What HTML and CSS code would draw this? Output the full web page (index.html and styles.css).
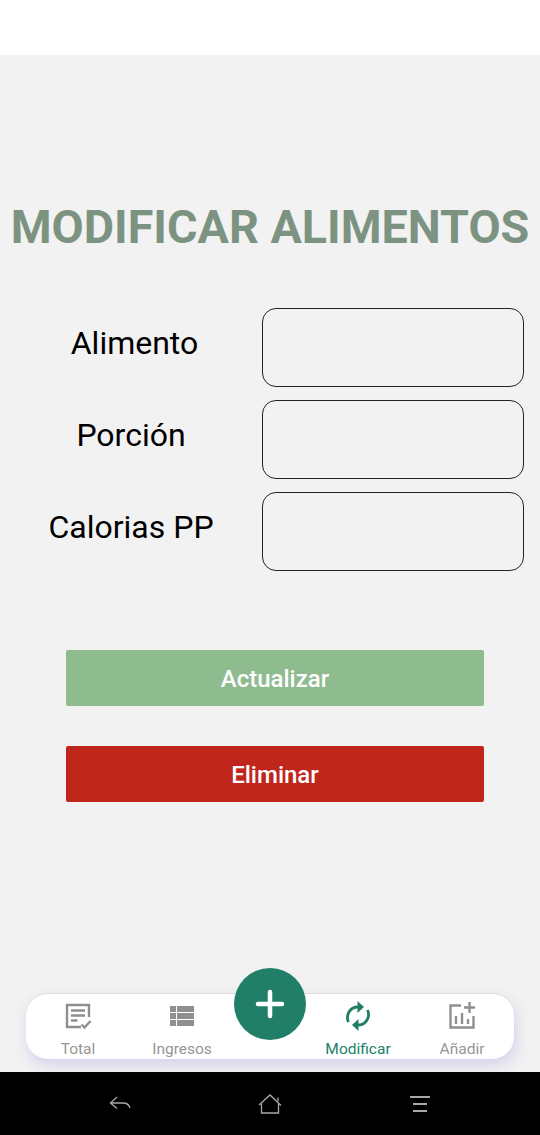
FILE: index.html
```html
<!DOCTYPE html>
<html lang="es">
<head>
    <meta charset="UTF-8">
    <meta name="viewport" content="width=device-width, initial-scale=1.0">
    <title>Modificar alimentos</title>
    <link rel="stylesheet" href="styles.css">
</head>
<body>
    <div class="status-bar"></div>

    <main class="screen">
        <h1 class="title">MODIFICAR ALIMENTOS</h1>

        <form class="form">
            <div class="form-row">
                <label class="form-label label-alimento" for="alimento">Alimento</label>
                <input class="form-input" id="alimento" type="text">
            </div>
            <div class="form-row">
                <label class="form-label" for="porcion">Porción</label>
                <input class="form-input" id="porcion" type="text">
            </div>
            <div class="form-row">
                <label class="form-label" for="calorias">Calorias PP</label>
                <input class="form-input" id="calorias" type="text">
            </div>
        </form>

        <div class="actions">
            <button class="btn btn-update" type="button">Actualizar</button>
            <button class="btn btn-delete" type="button">Eliminar</button>
        </div>

        <nav class="tabbar">
            <a class="tab">
                <svg class="tab-icon" viewBox="0 0 28 28" fill="none" stroke="#8f8f8f" stroke-width="2.400">
                    <path d="M17 25H3V3h22v12"/>
                    <path d="M7 8.500h14M7 13.500h14M7 18.500h6.500" stroke-width="2.400"/>
                    <path d="M17.500 22.500l3 3 6-6.500" stroke-width="2.400"/>
                </svg>
                <span>Total</span>
            </a>
            <a class="tab tab-ingresos">
                <svg class="tab-icon" viewBox="0 0 28 28" fill="#8f8f8f">
                    <rect x="2" y="4" width="6" height="6"/>
                    <rect x="9" y="4" width="17" height="6"/>
                    <rect x="2" y="11" width="6" height="6"/>
                    <rect x="9" y="11" width="17" height="6"/>
                    <rect x="2" y="18" width="6" height="6"/>
                    <rect x="9" y="18" width="17" height="6"/>
                </svg>
                <span>Ingresos</span>
            </a>
            <div class="tab-spacer"></div>
            <a class="tab tab-active">
                <svg class="tab-icon" viewBox="0 0 28 28" fill="none" stroke="#217f67" stroke-width="2.800">
                    <path d="M4.500 20A10.500 10.500 0 0 1 13 5h2"/>
                    <path d="M23.500 8A10.500 10.500 0 0 1 15 23h-2"/>
                    <path d="M13.500 -1l6.500 6-6.500 6z" fill="#217f67" stroke="none"/>
                    <path d="M14.500 17l-6.500 6 6.500 6z" fill="#217f67" stroke="none"/>
                </svg>
                <span>Modificar</span>
            </a>
            <a class="tab">
                <svg class="tab-icon" viewBox="0 0 28 28" fill="none" stroke="#8f8f8f" stroke-width="2.400">
                    <path d="M13 3.500H2.500V25.500h23V14"/>
                    <path d="M8 22v-8M14 22V11M20 22v-5" stroke-width="2.400"/>
                    <path d="M21.500 0v11M16 5.500h11" stroke-width="2.400"/>
                </svg>
                <span>Añadir</span>
            </a>
        </nav>

        <button class="fab" type="button" aria-label="Agregar">
            <svg viewBox="0 0 32 32" fill="none" stroke="#fff" stroke-width="4.500" stroke-linecap="round">
                <path d="M16 4v24M4 16h24"/>
            </svg>
        </button>
    </main>

    <div class="system-nav">
        <svg class="sys-icon" viewBox="0 0 24 20" fill="none" stroke="#a8a8a8" stroke-width="1.300">
            <path d="M9 3L2.500 9 9 14.500"/>
            <path d="M2.500 9H15c3.500 0 6 1.500 7 5"/>
        </svg>
        <svg class="sys-icon" viewBox="0 0 24 20" fill="none" stroke="#a8a8a8" stroke-width="1.300">
            <path d="M1 11L12 1l11 10.500"/>
            <path d="M3.500 9.500V19h17V9.500"/>
            <path d="M20 3.500v4"/>
        </svg>
        <svg class="sys-icon" viewBox="0 0 24 20" fill="none" stroke="#a8a8a8" stroke-width="1.800">
            <path d="M2 3h20M5 10h14M5 17h14"/>
        </svg>
    </div>
</body>
</html>
```

FILE: styles.css
```css
* {
    box-sizing: border-box;
}
html, body {
    margin: 0;
    padding: 0;
}
body {
    width: 540px;
    height: 1135px;
    display: flex;
    flex-direction: column;
    overflow: hidden;
    font-family: Roboto, "Liberation Sans", sans-serif;
    background-color: #fff;
}
.status-bar {
    height: 55px;
    flex: none;
    background-color: #fff;
}
.screen {
    position: relative;
    height: 1017px;
    flex: none;
    background-color: #f2f2f2;
    padding-top: 145px;
}
.title {
    margin: 0;
    height: 54px;
    font-size: 46.700px;
    line-height: 54px;
    font-weight: 700;
    color: #7c9280;
    text-align: center;
    white-space: nowrap;
    opacity: 0.99;
}
.form {
    margin-top: 54px;
    display: flex;
    flex-direction: column;
    gap: 13px;
}
.form-row {
    display: flex;
    align-items: center;
    height: 79px;
}
.form-label {
    width: 262px;
    flex: none;
    padding-bottom: 10px;
    font-size: 32px;
    line-height: 38px;
    color: #000;
    text-align: center;
}
.label-alimento {
    padding-left: 7px;
}
.form-input {
    width: 262px;
    height: 79px;
    flex: none;
    border: 1px solid #222;
    border-radius: 14px;
    background: transparent;
    outline: none;
}
.actions {
    margin: 79px 0 0 66px;
    width: 418px;
    display: flex;
    flex-direction: column;
    gap: 40px;
}
.btn {
    height: 56px;
    padding: 2px 0 0;
    border: none;
    border-radius: 2px;
    color: #fff;
    font-family: inherit;
    font-size: 24px;
    font-weight: 500;
}
.btn-update {
    background-color: #8fbc8f;
}
.btn-delete {
    background-color: #c0261b;
}
.tabbar {
    position: absolute;
    left: 26px;
    top: 938px;
    width: 488px;
    height: 66px;
    display: flex;
    background-color: #fff;
    border-top: 1px solid #dcdcdc;
    border-radius: 22px;
    box-shadow: 2px 6px 14px rgba(110, 90, 210, 0.22);
}
.tab {
    width: 104px;
    flex: none;
    display: flex;
    flex-direction: column;
    align-items: center;
    color: #969696;
    font-size: 15.500px;
    line-height: 18px;
    padding-top: 8px;
}
.tab-icon {
    width: 28px;
    height: 28px;
    margin-bottom: 10px;
    overflow: visible;
}
.tab-spacer {
    width: 72px;
    flex: none;
}
.tab-active {
    color: #217f67;
}
.fab {
    position: absolute;
    left: 234px;
    top: 913px;
    width: 72px;
    height: 72px;
    padding: 20px;
    border: none;
    border-radius: 50%;
    background-color: #217f67;
}
.fab svg {
    display: block;
    width: 32px;
    height: 32px;
}
.system-nav {
    flex: 1;
    background-color: #000;
    display: flex;
    justify-content: center;
    align-items: center;
    gap: 126px;
}
.sys-icon {
    width: 24px;
    height: 20px;
}
```
